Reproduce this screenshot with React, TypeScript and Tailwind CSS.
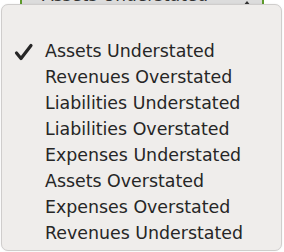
const OPTIONS = [
  'Assets Understated',
  'Revenues Overstated',
  'Liabilities Understated',
  'Liabilities Overstated',
  'Expenses Understated',
  'Assets Overstated',
  'Expenses Overstated',
  'Revenues Understated',
];

function Check() {
  return (
    <svg width="20" height="18" viewBox="0 0 20 18" className="absolute left-[12px] top-[5px]">
      <path d="M2.5 10 L7 15.5 L17 2.5" fill="none" stroke="#262626" strokeWidth="3.2" strokeLinecap="round" strokeLinejoin="round" />
    </svg>
  );
}

export default function App() {
  const selected = 0;

  return (
    <div className="w-[284px] h-[252px] bg-white overflow-hidden font-['DejaVu_Sans',sans-serif]">
      {/* select behind the menu, only its bottom edge shows */}
      <div className="h-[6px] mx-[20px] bg-[#dcdcdc] border-x-[2px] border-[#5e9b2c] overflow-hidden relative">
        <div className="absolute left-[20px] bottom-[1px] text-[17px] leading-[20px] text-[#333]">Assets Understated</div>
        <div className="absolute right-[11px] bottom-[0px] w-0 h-0 border-x-[4px] border-x-transparent border-b-[5px] border-b-[#333]" />
      </div>

      <div className="relative -mt-[2px] ml-[1px] w-[281px] h-[247px] rounded-[7px] bg-[#efedeb] border border-[#cfcdcc] pt-[33px] shadow-[0_0_2px_rgba(0,0,0,0.08)]">
        {OPTIONS.map((o, i) => (
          <div key={o} className="relative h-[26px] leading-[26px] pl-[43px] text-[17.4px] text-[#262626] whitespace-nowrap">
            {i === selected && <Check />}
            {o}
          </div>
        ))}
      </div>
    </div>
  );
}
